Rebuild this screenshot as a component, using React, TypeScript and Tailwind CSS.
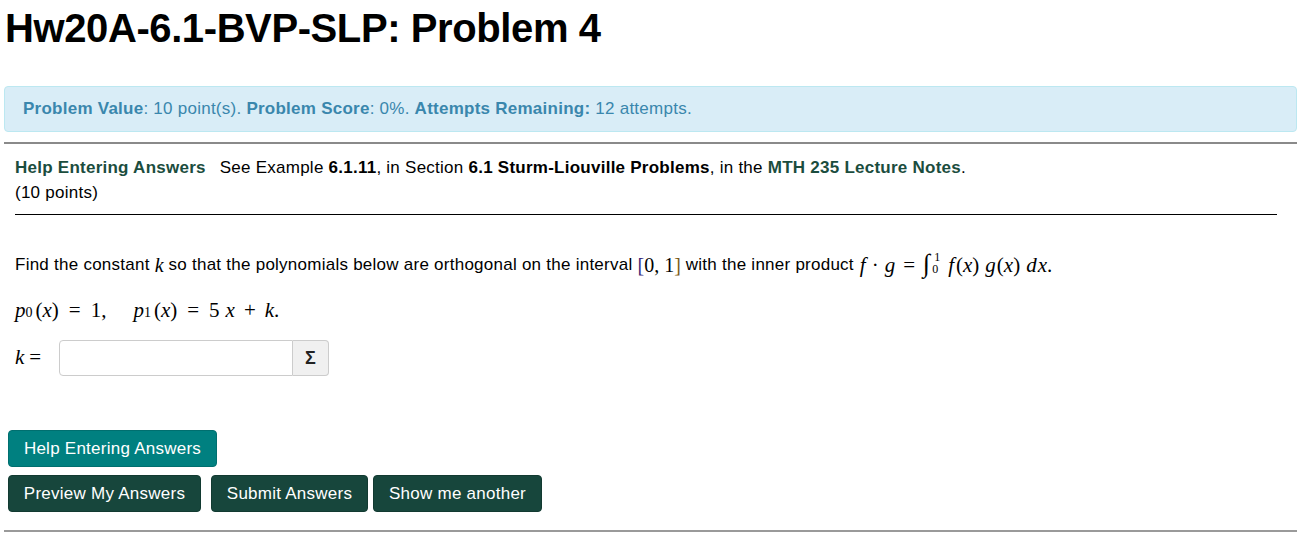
import React from "react";

const serif = { fontFamily: '"Liberation Serif", "DejaVu Serif", serif' };

const I = ({ children, className = "" }: { children: React.ReactNode; className?: string }) => (
  <span className={"italic " + className}>{children}</span>
);

export default function App() {
  return (
    <div className="bg-white text-black min-h-[558px]" style={{ fontFamily: '"Liberation Sans", Arial, sans-serif' }}>
      <div className="px-[4px] pt-[6px]">
        <h1 className="text-[40px] leading-[44px] font-bold ml-[1px] tracking-[-0.4px]">Hw20A-6.1-BVP-SLP: Problem 4</h1>
        <div className="mt-[36px] h-[46px] flex items-center rounded-[4px] border border-[#bce8f1] bg-[#d9edf7] pl-[18px] text-[17px] tracking-[0.25px] text-[#3a87ad]">
          <span>
            <b>Problem Value</b>: 10 point(s). <b>Problem Score</b>: 0%. <b>Attempts Remaining:</b> 12 attempts.
          </span>
        </div>
        <div className="mt-[10px] border-t-2 border-[#8a8a8a]"></div>
        <div className="px-[11px]">
          <div className="pt-[11px] text-[17px] tracking-[0.25px] leading-[25px]">
            <div>
              <span className="font-bold text-[#1b4d3e]">Help Entering Answers</span>
              <span className="ml-[14px]">See Example <b>6.1.11</b>, in Section <b>6.1 Sturm-Liouville Problems</b>, in the <b className="text-[#1b4d3e]">MTH 235 Lecture Notes</b>.</span>
            </div>
            <div>(10 points)</div>
          </div>
          <div className="mt-[9px] w-[1262px] border-t border-black"></div>
          <div className="mt-[38px] h-[24px] text-[17px] tracking-[0.25px] leading-[24px] flex items-center whitespace-nowrap">
            <span>Find the constant</span>
            <span className="text-[20px] italic mx-[5px] tracking-normal" style={serif}>k</span>
            <span>so that the polynomials below are orthogonal on the interval</span>
            <span className="text-[20px] mx-[5px] tracking-normal" style={serif}>
              <span className="text-[#3b2a7a]">[</span>0,<span className="ml-[5px]">1</span><span className="text-[#7a5a1a]">]</span>
            </span>
            <span>with the inner product</span>
            <span className="text-[21px] ml-[6px] tracking-normal flex items-center" style={serif}>
              <I>f</I>
              <span className="mx-[6px]">·</span>
              <I>g</I>
              <span className="mx-[8px]">=</span>
              <span className="italic text-[26px] leading-[24px] -mt-[2px]">∫</span>
              <span className="inline-flex flex-col text-[12px] leading-[12px] ml-[3px] mr-[8px] -mt-[4px]">
                <span className="ml-[1px]">1</span>
                <span className="-ml-[1px]">0</span>
              </span>
              <I>f</I><span className="ml-[2px]">(</span><I>x</I>)<span className="ml-[6px]"></span><I>g</I><span className="ml-[1px]">(</span><I>x</I>)<span className="ml-[6px]"></span><I>d</I><I className="ml-[1px]">x</I>.
            </span>
          </div>
          <div className="mt-[21px] text-[21px] leading-[24px] flex items-baseline" style={serif}>
            <I>p</I><span className="text-[14px]">0</span>
            <span className="ml-[3px]">(<I>x</I>)</span>
            <span className="mx-[10px]">=</span>
            <span>1,</span>
            <span className="ml-[27px]"><I>p</I></span><span className="text-[14px]">1</span>
            <span className="ml-[3px]">(<I>x</I>)</span>
            <span className="mx-[10px]">=</span>
            <span>5</span>
            <span className="ml-[6px]"><I>x</I></span>
            <span className="mx-[9px]">+</span>
            <I>k</I>.
          </div>
          <div className="mt-[15px] flex items-center">
            <span className="text-[21px] w-[44px]" style={serif}><I>k</I><span className="ml-[5px]">=</span></span>
            <div className="flex h-[36px]">
              <div className="w-[234px] h-[36px] border border-[#cccccc] rounded-l-[4px] bg-white"></div>
              <div className="w-[36px] h-[36px] border border-l-0 border-[#cccccc] rounded-r-[4px] bg-[#f0f0f0] flex items-center justify-center font-bold text-[18px] text-[#222]">Σ</div>
            </div>
          </div>
        </div>
        <div className="mt-[54px] pl-[4px] flex flex-col gap-[8px] text-[17px] tracking-[0.25px] text-white">
          <div>
            <button className="h-[37px] w-[209px] rounded-[4px] bg-[#008080] border border-[#006f6f]">Help Entering Answers</button>
          </div>
          <div className="flex gap-[10px]">
            <button className="h-[37px] w-[193px] rounded-[4px] bg-[#17463c] border border-[#123a31]">Preview My Answers</button>
            <button className="h-[37px] w-[157px] rounded-[4px] bg-[#17463c] border border-[#123a31] -mr-[5px]">Submit Answers</button>
            <button className="h-[37px] w-[169px] rounded-[4px] bg-[#17463c] border border-[#123a31]">Show me another</button>
          </div>
        </div>
        <div className="mt-[18px] border-t-2 border-[#9a9a9a]"></div>
      </div>
    </div>
  );
}
